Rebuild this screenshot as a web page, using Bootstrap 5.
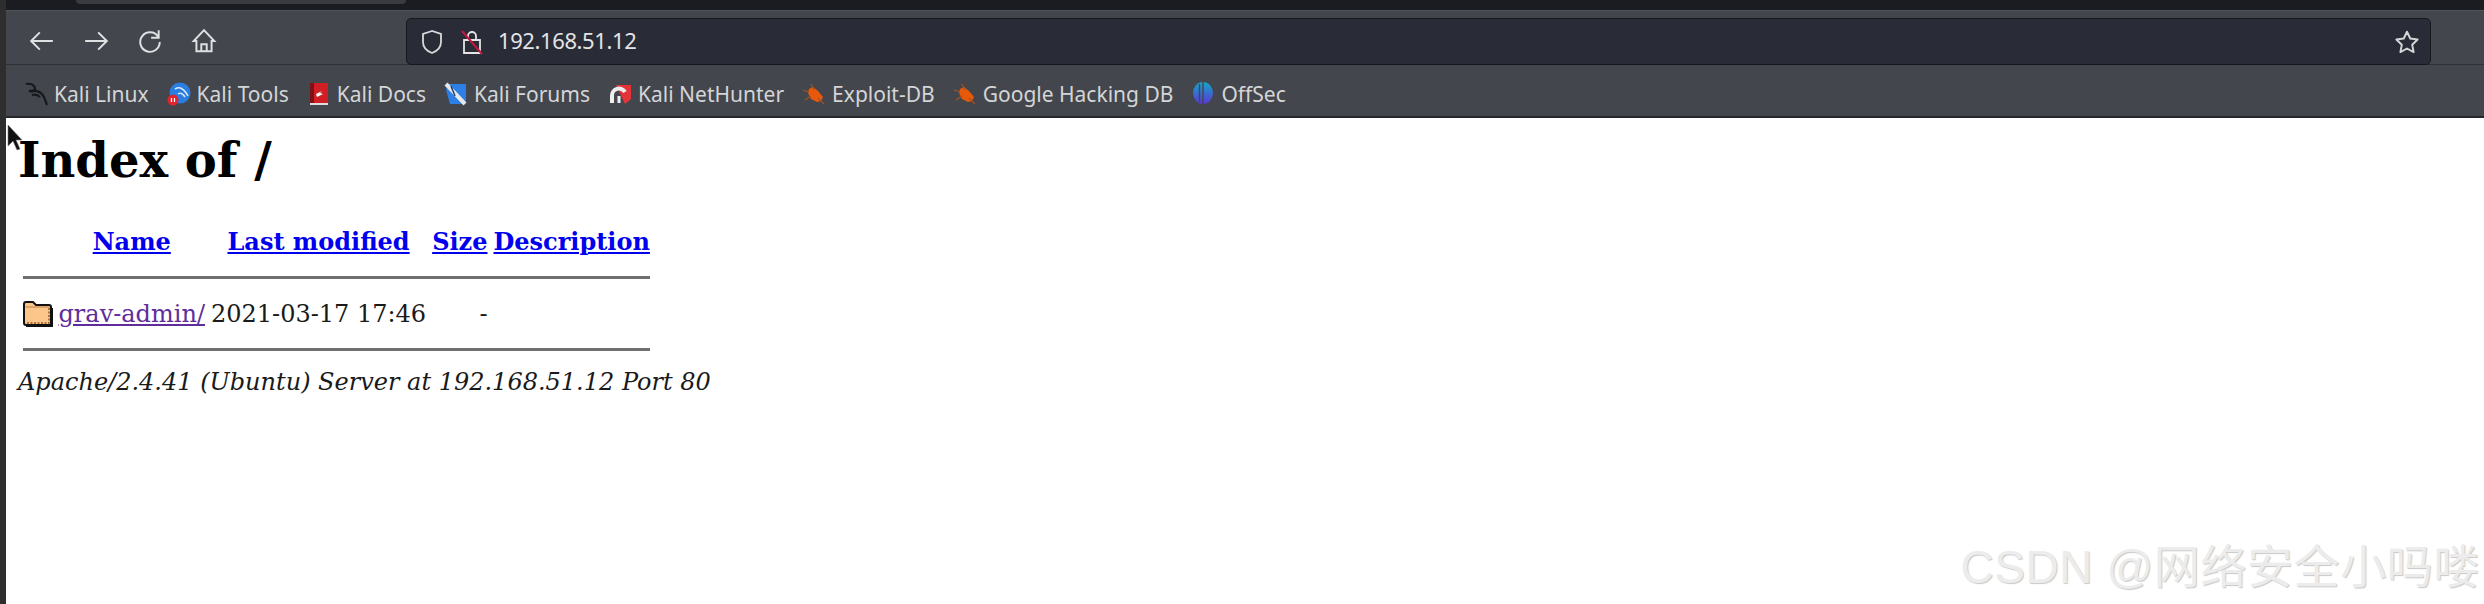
<!DOCTYPE html>
<html lang="en">
<head>
    <meta charset="UTF-8">
    <title>Index of /</title>
    <link rel="stylesheet" href="https://cdn.jsdelivr.net/npm/bootstrap@5.3.0/dist/css/bootstrap.min.css">
    <style>
        html, body { height: 100%; }
        body { background: #fff; overflow: hidden; }
        #desk { height: 604px; position: relative; }
        #leftEdge { width: 6px; background: #2e2e2e; flex: none; }
        #winColumn { min-width: 0; }
        #tabStrip { height: 10px; background: #1b1c21; }
        #tabStrip div { width: 330px; height: 4px; margin-left: 70px; background: #3a3b41; border-radius: 0 0 4px 4px; }
        #toolRow { height: 54px; background: #43464d; padding: 7px 53px 0 23px; border-top: 1px solid #50535a; }
        .nav-ico { width: 26px; height: 26px; color: #dfe0e2; flex: none; }
        #navIcons { gap: 28px; width: 377px; padding-top: 10px; }
        #urlBox { height: 47px; background: #292b36; border: 1px solid #17181c; border-radius: 5px; padding: 0 10px 0 13px; color: #e4e4e6; font: 22px "Noto Sans", sans-serif; }
        #urlText { margin-left: 14px; letter-spacing: -.4px; line-height: 40px; padding-bottom: 3px; }
        #markRow { height: 54px; background: #43464d; border-top: 1px solid #2f3136; border-bottom: 2px solid #26272b; padding: 7px 0 0 18px; color: #d4d5d7; font: 21px "Noto Sans", sans-serif; gap: 18px; }
        .mark-ico { width: 24px; height: 24px; flex: none; margin-right: 6px; }
        #pageBody { padding: 0 0 0 12px; font-family: "DejaVu Serif", serif; font-size: 24px; line-height: 1.17; color: #1a1a1a; }
        #pageBody h1 { font-family: inherit; font-size: 48px; font-weight: 700; color: #000; margin: 14px 0 35px; line-height: 1.17; }
        #dirTable { border-collapse: separate; border-spacing: 3px; }
        #dirTable th, #dirTable td { padding: 1.5px; }
        #dirTable a { color: #0000ee; }
        #dirTable a.seen { color: #5f2d9b; }
        #dirTable hr { margin: 14px 0 15px; border: 0; border-top: 3px solid #6f6f6f; opacity: 1; }
        #dirTable .rule2 hr { margin: 14px 0 0; }
        #pageBody address { font-style: italic; margin: 13px 0 0; }
        #mousePtr { position: absolute; left: 7px; top: 124px; width: 16px; height: 27px; }
        #stamp { position: absolute; right: 4px; top: 530px; font: 46px "Liberation Sans", "Noto Sans CJK SC", sans-serif; letter-spacing: .6px; color: #ececec; text-shadow: 1px 1px 1px #c8c8c8; white-space: nowrap; }
    </style>
</head>
<body>
    <div id="desk" class="d-flex">
        <div id="leftEdge"></div>
        <div id="winColumn" class="flex-grow-1">
            <div id="tabStrip"><div></div></div>
            <div id="toolRow" class="d-flex align-items-start">
                <div id="navIcons" class="d-flex">
                    <svg class="nav-ico" viewBox="0 0 24 24" fill="none" stroke="currentColor" stroke-width="1.8"><path d="M22 12H3M10 4l-8 8 8 8"/></svg>
                    <svg class="nav-ico" viewBox="0 0 24 24" fill="none" stroke="currentColor" stroke-width="1.8"><path d="M2 12h19M14 4l8 8-8 8"/></svg>
                    <svg class="nav-ico" viewBox="0 0 24 24" fill="none" stroke="currentColor" stroke-width="1.8"><path d="M19.5 8A9 9 0 1 0 21 13M20 2v7h-7"/></svg>
                    <svg class="nav-ico" viewBox="0 0 24 24" fill="none" stroke="currentColor" stroke-width="1.8"><path d="M12 2 2.5 12H5v9.5h14V12h2.5zM9.5 21.5V15h5v6.5"/></svg>
                </div>
                <div id="urlBox" class="d-flex align-items-center flex-grow-1">
                    <svg width="24" height="26" viewBox="0 0 24 26" fill="none" stroke="#d8d9db" stroke-width="1.8"><path d="M12 2 3 5v8c0 6 5 9.500 9 11 4-1.500 9-5 9-11V5z"/></svg>
                    <svg class="ms-3" width="24" height="28" viewBox="0 0 24 28" fill="none"><path d="M8 12V8a4 4 0 0 1 8 0v4M4 12h16v13H4z" stroke="#e4e4e6" stroke-width="1.8"/><path d="M2 3l20 23" stroke="#c5173f" stroke-width="2"/></svg>
                    <span id="urlText" class="flex-grow-1">192.168.51.12</span>
                    <svg width="26" height="26" viewBox="0 0 24 24" fill="none" stroke="#d4d5d7" stroke-width="1.8" stroke-linejoin="round"><path d="M12 2.500l3 6.300 6.800.9-5 4.800 1.300 6.800-6.100-3.300-6.100 3.300 1.300-6.800-5-4.800 6.800-.9z"/></svg>
                </div>
            </div>
            <div id="markRow" class="d-flex align-items-center">
                <div class="d-flex align-items-center">
                    <svg class="mark-ico" viewBox="0 0 24 24" fill="none" stroke="#17181b" stroke-width="2.2"><path d="M2 2c5-1 9 1 9 5 0 2-3 3-6 2M5 9c5-1 9-1 13 3 2 2 3 6 5 11M8 13c3-1 6 0 8 2"/></svg>
                    <span>Kali Linux</span>
                </div>
                <div class="d-flex align-items-center">
                    <svg class="mark-ico" viewBox="0 0 24 24"><circle cx="13" cy="11" r="10.500" fill="#2a7de1"/><path d="M8 7c5-3 9 0 13 7M11 12c3-2 5 0 7 3" stroke="#dbe9fa" stroke-width="1.500" fill="none"/><circle cx="6" cy="18" r="5.500" fill="#e1252f"/><path d="M4.500 16v4M7.500 16v4" stroke="#fff" stroke-width="1.200"/></svg>
                    <span>Kali Tools</span>
                </div>
                <div class="d-flex align-items-center">
                    <svg class="mark-ico" viewBox="0 0 24 24"><rect x="3" y="1" width="18" height="20" fill="#cf1f25"/><rect x="3" y="1" width="4" height="20" fill="#7e1116"/><rect x="3" y="21" width="18" height="2" fill="#ddd"/><path d="M9 12l6-3-2 2 3 1-6 3z" fill="#fff"/></svg>
                    <span>Kali Docs</span>
                </div>
                <div class="d-flex align-items-center">
                    <svg class="mark-ico" viewBox="0 0 24 24"><path d="M4 2h18v16l-4 4H6L2 8z" fill="#2b7fe6"/><path d="M2 2l19 20" stroke="#e8e8e8" stroke-width="4"/><path d="M7 4l4 10" stroke="#1b3f74" stroke-width="1.500"/></svg>
                    <span>Kali Forums</span>
                </div>
                <div class="d-flex align-items-center">
                    <svg class="mark-ico" viewBox="0 0 24 24"><path d="M8 3h15v14l-6 5z" fill="#e5333a"/><path d="M4 21v-7a7 7 0 0 1 13-4" stroke="#eee" stroke-width="4" fill="none"/><path d="M11 21v-7" stroke="#eee" stroke-width="3"/></svg>
                    <span>Kali NetHunter</span>
                </div>
                <div class="d-flex align-items-center">
                    <svg class="mark-ico" viewBox="0 0 24 24"><path d="M7 7l4-2 5 4 5 6-2 4-4 1-6-3-3-6z" fill="#e8590c"/><path d="M1 8l6 2M3 18l6-4M9 2l3 6M22 22l-6-6" stroke="#a5521f" stroke-width="1.200"/></svg>
                    <span>Exploit-DB</span>
                </div>
                <div class="d-flex align-items-center">
                    <svg class="mark-ico" viewBox="0 0 24 24"><path d="M7 7l4-2 5 4 5 6-2 4-4 1-6-3-3-6z" fill="#e8590c"/><path d="M1 8l6 2M3 18l6-4M9 2l3 6M22 22l-6-6" stroke="#a5521f" stroke-width="1.200"/></svg>
                    <span>Google Hacking DB</span>
                </div>
                <div class="d-flex align-items-center">
                    <svg class="mark-ico" viewBox="0 0 24 24"><defs><linearGradient id="offGrad" x1="0" y1="0" x2="0" y2="1"><stop offset="0" stop-color="#16a5c9"/><stop offset="1" stop-color="#5a37d6"/></linearGradient></defs><ellipse cx="12" cy="11" rx="10" ry="11" fill="url(#offGrad)"/><path d="M12 0v24M8.500 2v18" stroke="#43464d" stroke-width="1.400"/></svg>
                    <span>OffSec</span>
                </div>
            </div>
            <div id="pageBody">
                <h1>Index of /</h1>
                <table id="dirTable">
                    <tr>
                        <th></th>
                        <th class="text-center"><a href="#">Name</a></th>
                        <th class="text-center"><a href="#">Last modified</a></th>
                        <th class="text-center"><a href="#">Size</a></th>
                        <th class="text-center"><a href="#">Description</a></th>
                    </tr>
                    <tr><th colspan="5"><hr></th></tr>
                    <tr>
                        <td>
                            <svg class="d-block" width="30" height="27" viewBox="0 0 30 27"><path d="M3 2h7l3 3h13a2 2 0 0 1 2 2v16a2 2 0 0 1-2 2H3a2 2 0 0 1-2-2V4a2 2 0 0 1 2-2z" fill="#fcc58a" stroke="#111" stroke-width="2"/><path d="M2.500 7h24" stroke="#b98247" stroke-width="1"/><path d="M26 8v15M4 23h22" stroke="#8a5a2a" stroke-width="1.500" stroke-dasharray="2 1.500"/><path d="M3 26h26V8" fill="none" stroke="#111" stroke-width="2.500"/></svg>
                        </td>
                        <td><a href="#" class="seen">grav-admin/</a></td>
                        <td>2021-03-17 17:46</td>
                        <td class="text-end">-</td>
                        <td>&nbsp;</td>
                    </tr>
                    <tr class="rule2"><th colspan="5"><hr></th></tr>
                </table>
                <address>Apache/2.4.41 (Ubuntu) Server at 192.168.51.12 Port 80</address>
            </div>
        </div>
        <svg id="mousePtr" viewBox="0 0 16 27"><path d="M1 1v21l5-5 4 9 3-1-4-9h6z" fill="#111" stroke="#777" stroke-width=".6"/></svg>
        <div id="stamp">CSDN @网络安全小吗喽</div>
    </div>
    <script src="https://cdn.jsdelivr.net/npm/bootstrap@5.3.0/dist/js/bootstrap.bundle.min.js"></script>
</body>
</html>
